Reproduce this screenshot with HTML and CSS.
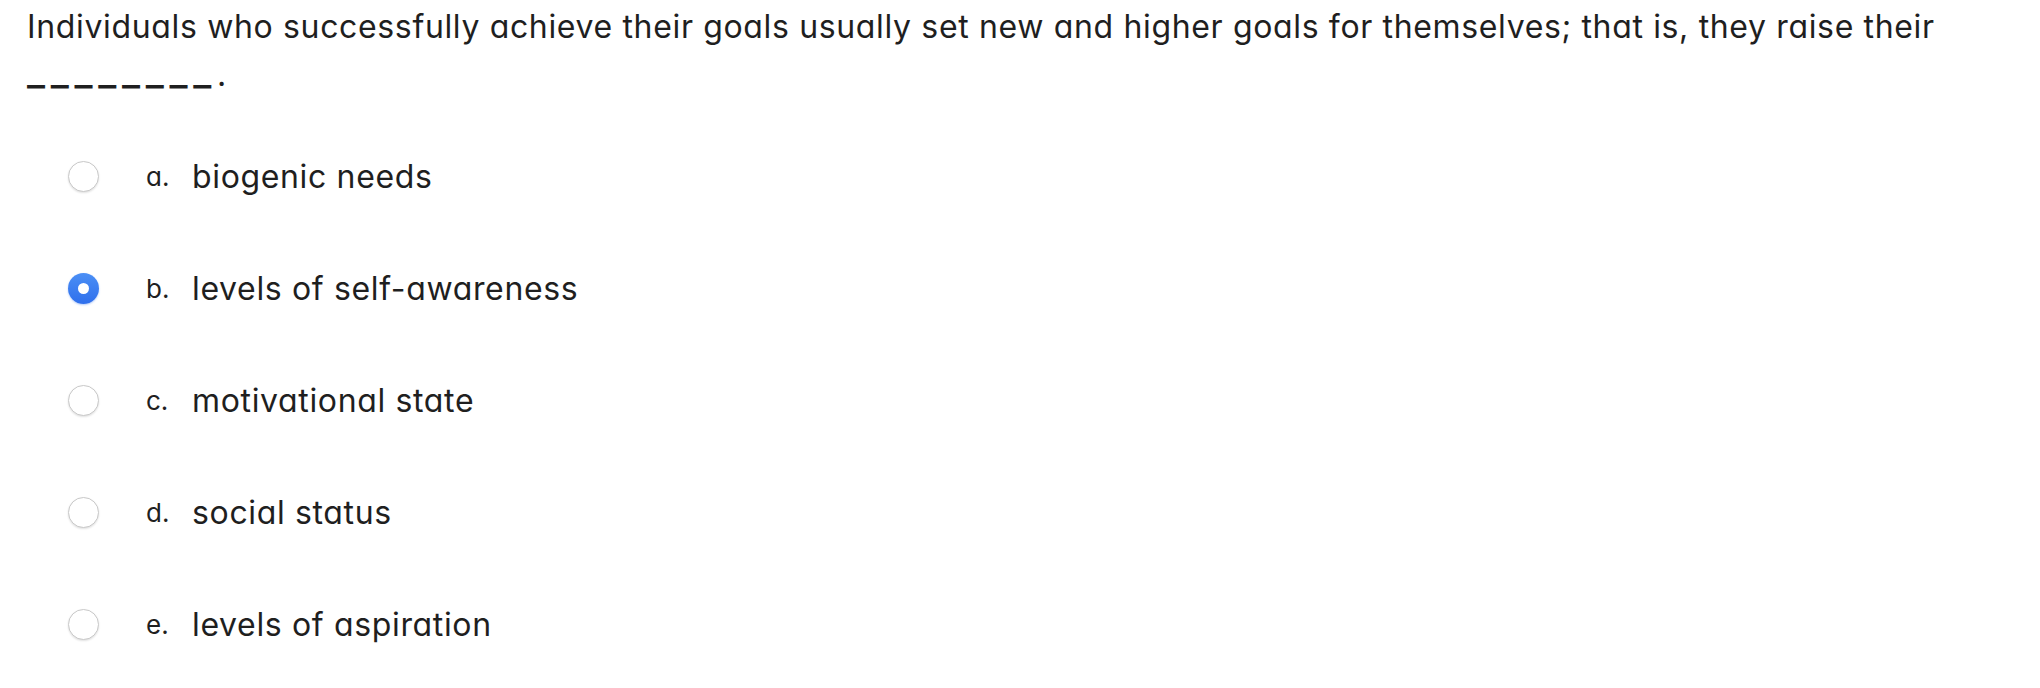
FILE: index.html
```html
<!DOCTYPE html>
<html>
<head>
<meta charset="utf-8">
<link rel="stylesheet" href="styles.css">
</head>
<body>
<div class="quiz">
  <p class="question">Individuals who successfully achieve their goals usually set new and higher goals for themselves; that is, they raise their <span class="blank">________</span>.</p>
  <ul class="options">
    <li class="option"><span class="radio"></span><span class="letter">a.</span><span class="text">biogenic needs</span></li>
    <li class="option"><span class="radio checked"></span><span class="letter">b.</span><span class="text">levels of self-awareness</span></li>
    <li class="option"><span class="radio"></span><span class="letter">c.</span><span class="text">motivational state</span></li>
    <li class="option"><span class="radio"></span><span class="letter">d.</span><span class="text">social status</span></li>
    <li class="option"><span class="radio"></span><span class="letter">e.</span><span class="text">levels of aspiration</span></li>
  </ul>
</div>
</body>
</html>
```
FILE: styles.css
```css
html, body {
  margin: 0;
  padding: 0;
  background: #ffffff;
}
body {
  font-family: Inter, "Open Sans", sans-serif;
  font-feature-settings: "cv11" 1;
  color: #1f1f1f;
}
.quiz {
  padding: 0 0 0 27px;
}
.question {
  margin: 0;
  padding-top: 3px;
  font-size: 32px;
  letter-spacing: 0.65px;
  line-height: 48px;
  width: 1960px;
}
.blank {
  font-size: 39px;
  line-height: 0;
  letter-spacing: 5.7px;
  font-weight: 500;
  vertical-align: 1px;
}
.options {
  list-style: none;
  margin: 21px 0 0 0;
  padding: 0;
}
.option {
  display: flex;
  align-items: center;
  height: 112px;
}
.radio {
  box-sizing: border-box;
  width: 31px;
  height: 31px;
  border-radius: 50%;
  border: 1px solid #c9c9c9;
  background: #fff;
  box-shadow: 0 1px 2px rgba(0,0,0,0.12);
  margin-left: 41px;
  flex: none;
  display: flex;
  align-items: center;
  justify-content: center;
}
.radio.checked {
  border: none;
  background: linear-gradient(#4b8ff5, #2f6fec);
  box-shadow: 0 1px 2px rgba(47,111,236,0.35);
}
.radio.checked::after {
  content: "";
  width: 11px;
  height: 11px;
  border-radius: 50%;
  background: #fff;
}
.letter {
  margin-left: 47px;
  width: 46px;
  font-size: 26px;
  flex: none;
}
.text {
  font-size: 32px;
  letter-spacing: 0.65px;
}
```
